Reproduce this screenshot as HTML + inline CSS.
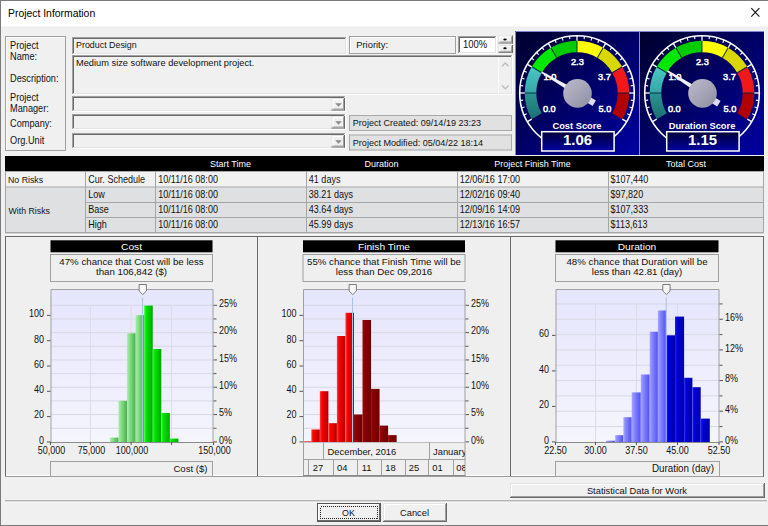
<!DOCTYPE html>
<html><head><meta charset="utf-8"><style>
*{margin:0;padding:0}
html,body{width:768px;height:526px;overflow:hidden;background:#f0f0f0}
svg{position:absolute;left:0;top:0;display:block}
</style></head><body>
<svg width="768" height="526" viewBox="0 0 768 526" font-family='"Liberation Sans", sans-serif'>
<rect x="0" y="0" width="768" height="526" fill="#f0f0f0" />
<rect x="1" y="1" width="767" height="25" fill="#ffffff" />
<line x1="1" y1="26.5" x2="768" y2="26.5" stroke="#f6f6f6" stroke-width="1" />
<line x1="0" y1="0.5" x2="768" y2="0.5" stroke="#7a7a7a" stroke-width="1" />
<line x1="0.5" y1="0" x2="0.5" y2="526" stroke="#7a7a7a" stroke-width="1" />
<line x1="0" y1="525.5" x2="768" y2="525.5" stroke="#7a7a7a" stroke-width="1" />
<text transform="translate(8,17) scale(1,1.06)" font-size="10.4" fill="#000" text-anchor="start" font-weight="normal" >Project Information</text>
<path d="M751.3,8.2 L759.4,16.6 M759.4,8.2 L751.3,16.6" stroke="#111" stroke-width="1.1"/>
<line x1="5" y1="36.5" x2="66" y2="36.5" stroke="#a0a0a0" stroke-width="1" />
<line x1="5.5" y1="36" x2="5.5" y2="151" stroke="#a0a0a0" stroke-width="1" />
<line x1="5" y1="150.5" x2="66" y2="150.5" stroke="#a0a0a0" stroke-width="1" />
<line x1="65.5" y1="36" x2="65.5" y2="151" stroke="#a0a0a0" stroke-width="1" />
<line x1="6" y1="37.5" x2="65" y2="37.5" stroke="#ffffff" stroke-width="1" />
<line x1="6.5" y1="37" x2="6.5" y2="150" stroke="#ffffff" stroke-width="1" />
<text transform="translate(10,49) scale(1,1.15)" font-size="9.2" fill="#111" text-anchor="start" font-weight="normal" >Project</text>
<text transform="translate(10,60) scale(1,1.15)" font-size="9.2" fill="#111" text-anchor="start" font-weight="normal" >Name:</text>
<text transform="translate(10,82.3) scale(1,1.15)" font-size="9.2" fill="#111" text-anchor="start" font-weight="normal" >Description:</text>
<text transform="translate(10,100.7) scale(1,1.15)" font-size="9.2" fill="#111" text-anchor="start" font-weight="normal" >Project</text>
<text transform="translate(10,111.6) scale(1,1.15)" font-size="9.2" fill="#111" text-anchor="start" font-weight="normal" >Manager:</text>
<text transform="translate(10,126.8) scale(1,1.15)" font-size="9.2" fill="#111" text-anchor="start" font-weight="normal" >Company:</text>
<text transform="translate(10,143.9) scale(1,1.15)" font-size="9.2" fill="#111" text-anchor="start" font-weight="normal" >Org.Unit</text>
<rect x="72" y="37" width="275" height="18" fill="#f0f0f0" />
<line x1="72" y1="37.5" x2="347" y2="37.5" stroke="#a0a0a0" stroke-width="1" />
<line x1="72.5" y1="37" x2="72.5" y2="55" stroke="#a0a0a0" stroke-width="1" />
<line x1="72" y1="54.5" x2="347" y2="54.5" stroke="#ffffff" stroke-width="1" />
<line x1="346.5" y1="37" x2="346.5" y2="55" stroke="#ffffff" stroke-width="1" />
<line x1="73" y1="38.5" x2="346" y2="38.5" stroke="#696969" stroke-width="1" />
<line x1="73.5" y1="38" x2="73.5" y2="54" stroke="#696969" stroke-width="1" />
<line x1="73" y1="53.5" x2="346" y2="53.5" stroke="#e3e3e3" stroke-width="1" />
<line x1="345.5" y1="38" x2="345.5" y2="54" stroke="#e3e3e3" stroke-width="1" />
<text transform="translate(76,47.5) scale(1,1.03)" font-size="8.9" fill="#111" text-anchor="start" font-weight="normal" >Product Design</text>
<rect x="72" y="55" width="441" height="40" fill="#f0f0f0" />
<line x1="72" y1="55.5" x2="513" y2="55.5" stroke="#a0a0a0" stroke-width="1" />
<line x1="72.5" y1="55" x2="72.5" y2="95" stroke="#a0a0a0" stroke-width="1" />
<line x1="72" y1="94.5" x2="513" y2="94.5" stroke="#ffffff" stroke-width="1" />
<line x1="512.5" y1="55" x2="512.5" y2="95" stroke="#ffffff" stroke-width="1" />
<line x1="73" y1="56.5" x2="512" y2="56.5" stroke="#696969" stroke-width="1" />
<line x1="73.5" y1="56" x2="73.5" y2="94" stroke="#696969" stroke-width="1" />
<line x1="73" y1="93.5" x2="512" y2="93.5" stroke="#e3e3e3" stroke-width="1" />
<line x1="511.5" y1="56" x2="511.5" y2="94" stroke="#e3e3e3" stroke-width="1" />
<text transform="translate(76,66.2) scale(1,1.03)" font-size="9.27" fill="#111" text-anchor="start" font-weight="normal" >Medium size software development project.</text>
<line x1="498.5" y1="57" x2="498.5" y2="94" stroke="#fafafa" stroke-width="1" />
<path d="M502,66.3 L505.3,63 L508.6,66.3" fill="none" stroke="#bdbdbd" stroke-width="1.5"/><path d="M502,85.5 L505.3,88.8 L508.6,85.5" fill="none" stroke="#bdbdbd" stroke-width="1.5"/>
<rect x="349" y="36" width="107" height="18" fill="#f0f0f0" />
<line x1="349" y1="36.5" x2="456" y2="36.5" stroke="#a0a0a0" stroke-width="1" />
<line x1="349.5" y1="36" x2="349.5" y2="54" stroke="#a0a0a0" stroke-width="1" />
<line x1="349" y1="53.5" x2="456" y2="53.5" stroke="#a0a0a0" stroke-width="1" />
<line x1="455.5" y1="36" x2="455.5" y2="54" stroke="#a0a0a0" stroke-width="1" />
<line x1="350" y1="37.5" x2="455" y2="37.5" stroke="#ffffff" stroke-width="1" />
<line x1="350.5" y1="37" x2="350.5" y2="53" stroke="#ffffff" stroke-width="1" />
<text transform="translate(356.2,47.6) scale(1,1.05)" font-size="9.4" fill="#111" text-anchor="start" font-weight="normal" >Priority:</text>
<rect x="458" y="36" width="39" height="18" fill="#ffffff" />
<line x1="458" y1="36.5" x2="497" y2="36.5" stroke="#a0a0a0" stroke-width="1" />
<line x1="458.5" y1="36" x2="458.5" y2="54" stroke="#a0a0a0" stroke-width="1" />
<line x1="458" y1="53.5" x2="497" y2="53.5" stroke="#ffffff" stroke-width="1" />
<line x1="496.5" y1="36" x2="496.5" y2="54" stroke="#ffffff" stroke-width="1" />
<line x1="459" y1="37.5" x2="496" y2="37.5" stroke="#696969" stroke-width="1" />
<line x1="459.5" y1="37" x2="459.5" y2="53" stroke="#696969" stroke-width="1" />
<line x1="459" y1="52.5" x2="496" y2="52.5" stroke="#e3e3e3" stroke-width="1" />
<line x1="495.5" y1="37" x2="495.5" y2="53" stroke="#e3e3e3" stroke-width="1" />
<text transform="translate(463,47.8) scale(1,1.08)" font-size="9.5" fill="#111" text-anchor="start" font-weight="normal" >100%</text>
<rect x="498.5" y="35.5" width="14.5" height="8.0" fill="#f0f0f0" />
<line x1="498.5" y1="36.0" x2="513" y2="36.0" stroke="#e3e3e3" stroke-width="1" />
<line x1="499.0" y1="35.5" x2="499.0" y2="43.5" stroke="#e3e3e3" stroke-width="1" />
<line x1="498.5" y1="43.0" x2="513" y2="43.0" stroke="#696969" stroke-width="1" />
<line x1="512.5" y1="35.5" x2="512.5" y2="43.5" stroke="#696969" stroke-width="1" />
<line x1="499.5" y1="37.0" x2="512" y2="37.0" stroke="#ffffff" stroke-width="1" />
<line x1="500.0" y1="36.5" x2="500.0" y2="42.5" stroke="#ffffff" stroke-width="1" />
<line x1="499.5" y1="42.0" x2="512" y2="42.0" stroke="#a0a0a0" stroke-width="1" />
<line x1="511.5" y1="36.5" x2="511.5" y2="42.5" stroke="#a0a0a0" stroke-width="1" />
<ellipse cx="505" cy="39.4" rx="1.7" ry="1" fill="#000"/>
<rect x="498.5" y="45" width="14.5" height="7.799999999999997" fill="#f0f0f0" />
<line x1="498.5" y1="45.5" x2="513" y2="45.5" stroke="#e3e3e3" stroke-width="1" />
<line x1="499.0" y1="45" x2="499.0" y2="52.8" stroke="#e3e3e3" stroke-width="1" />
<line x1="498.5" y1="52.3" x2="513" y2="52.3" stroke="#696969" stroke-width="1" />
<line x1="512.5" y1="45" x2="512.5" y2="52.8" stroke="#696969" stroke-width="1" />
<line x1="499.5" y1="46.5" x2="512" y2="46.5" stroke="#ffffff" stroke-width="1" />
<line x1="500.0" y1="46" x2="500.0" y2="51.8" stroke="#ffffff" stroke-width="1" />
<line x1="499.5" y1="51.3" x2="512" y2="51.3" stroke="#a0a0a0" stroke-width="1" />
<line x1="511.5" y1="46" x2="511.5" y2="51.8" stroke="#a0a0a0" stroke-width="1" />
<ellipse cx="505" cy="48.3" rx="1.7" ry="1" fill="#000"/>
<rect x="72" y="96" width="274" height="16" fill="#f0f0f0" />
<line x1="72" y1="96.5" x2="346" y2="96.5" stroke="#a0a0a0" stroke-width="1" />
<line x1="72.5" y1="96" x2="72.5" y2="112" stroke="#a0a0a0" stroke-width="1" />
<line x1="72" y1="111.5" x2="346" y2="111.5" stroke="#ffffff" stroke-width="1" />
<line x1="345.5" y1="96" x2="345.5" y2="112" stroke="#ffffff" stroke-width="1" />
<line x1="73" y1="97.5" x2="345" y2="97.5" stroke="#696969" stroke-width="1" />
<line x1="73.5" y1="97" x2="73.5" y2="111" stroke="#696969" stroke-width="1" />
<line x1="73" y1="110.5" x2="345" y2="110.5" stroke="#e3e3e3" stroke-width="1" />
<line x1="344.5" y1="97" x2="344.5" y2="111" stroke="#e3e3e3" stroke-width="1" />
<rect x="331.5" y="98" width="13.5" height="12.5" fill="#f0f0f0" />
<line x1="331.5" y1="98.5" x2="345" y2="98.5" stroke="#e3e3e3" stroke-width="1" />
<line x1="332.0" y1="98" x2="332.0" y2="110.5" stroke="#e3e3e3" stroke-width="1" />
<line x1="331.5" y1="110.0" x2="345" y2="110.0" stroke="#696969" stroke-width="1" />
<line x1="344.5" y1="98" x2="344.5" y2="110.5" stroke="#696969" stroke-width="1" />
<line x1="332.5" y1="99.5" x2="344" y2="99.5" stroke="#ffffff" stroke-width="1" />
<line x1="333.0" y1="99" x2="333.0" y2="109.5" stroke="#ffffff" stroke-width="1" />
<line x1="332.5" y1="109.0" x2="344" y2="109.0" stroke="#a0a0a0" stroke-width="1" />
<line x1="343.5" y1="99" x2="343.5" y2="109.5" stroke="#a0a0a0" stroke-width="1" />
<path d="M335.2,103.3 L341.8,103.3 L338.5,106.8 Z" fill="#8a8a8a"/>
<rect x="72" y="114" width="274" height="16" fill="#f0f0f0" />
<line x1="72" y1="114.5" x2="346" y2="114.5" stroke="#a0a0a0" stroke-width="1" />
<line x1="72.5" y1="114" x2="72.5" y2="130" stroke="#a0a0a0" stroke-width="1" />
<line x1="72" y1="129.5" x2="346" y2="129.5" stroke="#ffffff" stroke-width="1" />
<line x1="345.5" y1="114" x2="345.5" y2="130" stroke="#ffffff" stroke-width="1" />
<line x1="73" y1="115.5" x2="345" y2="115.5" stroke="#696969" stroke-width="1" />
<line x1="73.5" y1="115" x2="73.5" y2="129" stroke="#696969" stroke-width="1" />
<line x1="73" y1="128.5" x2="345" y2="128.5" stroke="#e3e3e3" stroke-width="1" />
<line x1="344.5" y1="115" x2="344.5" y2="129" stroke="#e3e3e3" stroke-width="1" />
<rect x="331.5" y="116" width="13.5" height="12.5" fill="#f0f0f0" />
<line x1="331.5" y1="116.5" x2="345" y2="116.5" stroke="#e3e3e3" stroke-width="1" />
<line x1="332.0" y1="116" x2="332.0" y2="128.5" stroke="#e3e3e3" stroke-width="1" />
<line x1="331.5" y1="128.0" x2="345" y2="128.0" stroke="#696969" stroke-width="1" />
<line x1="344.5" y1="116" x2="344.5" y2="128.5" stroke="#696969" stroke-width="1" />
<line x1="332.5" y1="117.5" x2="344" y2="117.5" stroke="#ffffff" stroke-width="1" />
<line x1="333.0" y1="117" x2="333.0" y2="127.5" stroke="#ffffff" stroke-width="1" />
<line x1="332.5" y1="127.0" x2="344" y2="127.0" stroke="#a0a0a0" stroke-width="1" />
<line x1="343.5" y1="117" x2="343.5" y2="127.5" stroke="#a0a0a0" stroke-width="1" />
<path d="M335.2,121.3 L341.8,121.3 L338.5,124.8 Z" fill="#8a8a8a"/>
<rect x="72" y="133" width="274" height="16" fill="#f0f0f0" />
<line x1="72" y1="133.5" x2="346" y2="133.5" stroke="#a0a0a0" stroke-width="1" />
<line x1="72.5" y1="133" x2="72.5" y2="149" stroke="#a0a0a0" stroke-width="1" />
<line x1="72" y1="148.5" x2="346" y2="148.5" stroke="#ffffff" stroke-width="1" />
<line x1="345.5" y1="133" x2="345.5" y2="149" stroke="#ffffff" stroke-width="1" />
<line x1="73" y1="134.5" x2="345" y2="134.5" stroke="#696969" stroke-width="1" />
<line x1="73.5" y1="134" x2="73.5" y2="148" stroke="#696969" stroke-width="1" />
<line x1="73" y1="147.5" x2="345" y2="147.5" stroke="#e3e3e3" stroke-width="1" />
<line x1="344.5" y1="134" x2="344.5" y2="148" stroke="#e3e3e3" stroke-width="1" />
<rect x="331.5" y="135" width="13.5" height="12.5" fill="#f0f0f0" />
<line x1="331.5" y1="135.5" x2="345" y2="135.5" stroke="#e3e3e3" stroke-width="1" />
<line x1="332.0" y1="135" x2="332.0" y2="147.5" stroke="#e3e3e3" stroke-width="1" />
<line x1="331.5" y1="147.0" x2="345" y2="147.0" stroke="#696969" stroke-width="1" />
<line x1="344.5" y1="135" x2="344.5" y2="147.5" stroke="#696969" stroke-width="1" />
<line x1="332.5" y1="136.5" x2="344" y2="136.5" stroke="#ffffff" stroke-width="1" />
<line x1="333.0" y1="136" x2="333.0" y2="146.5" stroke="#ffffff" stroke-width="1" />
<line x1="332.5" y1="146.0" x2="344" y2="146.0" stroke="#a0a0a0" stroke-width="1" />
<line x1="343.5" y1="136" x2="343.5" y2="146.5" stroke="#a0a0a0" stroke-width="1" />
<path d="M335.2,140.3 L341.8,140.3 L338.5,143.8 Z" fill="#8a8a8a"/>
<rect x="349" y="115" width="163" height="16" fill="#e1e1e1" />
<line x1="349" y1="115.5" x2="512" y2="115.5" stroke="#a8a8a8" stroke-width="1" />
<line x1="349.5" y1="115" x2="349.5" y2="131" stroke="#a8a8a8" stroke-width="1" />
<line x1="349" y1="130.5" x2="512" y2="130.5" stroke="#a8a8a8" stroke-width="1" />
<line x1="511.5" y1="115" x2="511.5" y2="131" stroke="#a8a8a8" stroke-width="1" />
<text transform="translate(352.8,126.1) scale(1,1.1)" font-size="9.07" fill="#111" text-anchor="start" font-weight="normal" >Project Created: 09/14/19 23:23</text>
<rect x="349" y="134.5" width="163" height="16" fill="#e1e1e1" />
<line x1="349" y1="135.0" x2="512" y2="135.0" stroke="#a8a8a8" stroke-width="1" />
<line x1="349.5" y1="134.5" x2="349.5" y2="150.5" stroke="#a8a8a8" stroke-width="1" />
<line x1="349" y1="150.0" x2="512" y2="150.0" stroke="#a8a8a8" stroke-width="1" />
<line x1="511.5" y1="134.5" x2="511.5" y2="150.5" stroke="#a8a8a8" stroke-width="1" />
<text transform="translate(352.8,145.6) scale(1,1.1)" font-size="9.07" fill="#111" text-anchor="start" font-weight="normal" >Project Modified: 05/04/22 18:14</text>
<defs>
<linearGradient id="bga" x1="0" y1="0" x2="1" y2="1"><stop offset="0" stop-color="#00002c"/><stop offset="1" stop-color="#0000a2"/></linearGradient>
<linearGradient id="huba" x1="0" y1="0" x2="1" y2="1"><stop offset="0" stop-color="#bcbccc"/><stop offset="1" stop-color="#8e8ea2"/></linearGradient>
<linearGradient id="boxa" x1="0" y1="0" x2="0" y2="1"><stop offset="0" stop-color="#000038"/><stop offset="1" stop-color="#0000a0"/></linearGradient>
</defs>
<rect x="515" y="31" width="124" height="124" fill="url(#bga)"/>
<path d="M515.5,155 L515.5,31.5 L639,31.5" fill="none" stroke="#8484d4" stroke-width="1"/>
<defs><linearGradient id="t1a" gradientUnits="userSpaceOnUse" x1="0" y1="93" x2="0" y2="120"><stop offset="0" stop-color="#2a9494"/><stop offset="1" stop-color="#1c6e6e"/></linearGradient><linearGradient id="t2a" gradientUnits="userSpaceOnUse" x1="0" y1="66" x2="0" y2="93"><stop offset="0" stop-color="#4cc8c8"/><stop offset="1" stop-color="#36a6a6"/></linearGradient></defs>
<path d="M531.71,119.15 A52.3,52.3 0 0 1 524.70,93.00 L536.30,93.00 A40.7,40.7 0 0 0 541.75,113.35 Z" fill="url(#t1a)"/>
<path d="M524.70,93.00 A52.3,52.3 0 0 1 531.71,66.85 L541.75,72.65 A40.7,40.7 0 0 0 536.30,93.00 Z" fill="url(#t2a)"/>
<path d="M531.71,66.85 A52.3,52.3 0 0 1 550.85,47.71 L556.65,57.75 A40.7,40.7 0 0 0 541.75,72.65 Z" fill="#00e800"/>
<path d="M550.85,47.71 A52.3,52.3 0 0 1 577.00,40.70 L577.00,52.30 A40.7,40.7 0 0 0 556.65,57.75 Z" fill="#00cc00"/>
<path d="M577.00,40.70 A52.3,52.3 0 0 1 603.15,47.71 L597.35,57.75 A40.7,40.7 0 0 0 577.00,52.30 Z" fill="#ffff00"/>
<path d="M603.15,47.71 A52.3,52.3 0 0 1 622.29,66.85 L612.25,72.65 A40.7,40.7 0 0 0 597.35,57.75 Z" fill="#d8d800"/>
<path d="M622.29,66.85 A52.3,52.3 0 0 1 629.30,93.00 L617.70,93.00 A40.7,40.7 0 0 0 612.25,72.65 Z" fill="#f01818"/>
<path d="M629.30,93.00 A52.3,52.3 0 0 1 622.29,119.15 L612.25,113.35 A40.7,40.7 0 0 0 617.70,93.00 Z" fill="#b00000"/>
<line x1="536.30" y1="93.00" x2="524.70" y2="93.00" stroke="#002040" stroke-width="1.1" stroke-opacity="0.8"/>
<line x1="541.75" y1="72.65" x2="531.71" y2="66.85" stroke="#002040" stroke-width="1.1" stroke-opacity="0.8"/>
<line x1="556.65" y1="57.75" x2="550.85" y2="47.71" stroke="#002040" stroke-width="1.1" stroke-opacity="0.8"/>
<line x1="577.00" y1="52.30" x2="577.00" y2="40.70" stroke="#002040" stroke-width="1.1" stroke-opacity="0.8"/>
<line x1="597.35" y1="57.75" x2="603.15" y2="47.71" stroke="#002040" stroke-width="1.1" stroke-opacity="0.8"/>
<line x1="612.25" y1="72.65" x2="622.29" y2="66.85" stroke="#002040" stroke-width="1.1" stroke-opacity="0.8"/>
<line x1="617.70" y1="93.00" x2="629.30" y2="93.00" stroke="#002040" stroke-width="1.1" stroke-opacity="0.8"/>
<circle cx="577" cy="93" r="57.3" fill="none" stroke="#ffffff" stroke-width="1.6"/>
<line x1="531.71" y1="119.15" x2="527.38" y2="121.65" stroke="#ffffff" stroke-width="1.3"/>
<line x1="526.83" y1="113.78" x2="524.06" y2="114.93" stroke="#ffffff" stroke-width="1.1"/>
<line x1="524.55" y1="107.05" x2="521.65" y2="107.83" stroke="#ffffff" stroke-width="1.1"/>
<line x1="523.16" y1="100.09" x2="520.19" y2="100.48" stroke="#ffffff" stroke-width="1.1"/>
<line x1="524.70" y1="93.00" x2="519.70" y2="93.00" stroke="#ffffff" stroke-width="1.3"/>
<line x1="523.16" y1="85.91" x2="520.19" y2="85.52" stroke="#ffffff" stroke-width="1.1"/>
<line x1="524.55" y1="78.95" x2="521.65" y2="78.17" stroke="#ffffff" stroke-width="1.1"/>
<line x1="526.83" y1="72.22" x2="524.06" y2="71.07" stroke="#ffffff" stroke-width="1.1"/>
<line x1="531.71" y1="66.85" x2="527.38" y2="64.35" stroke="#ffffff" stroke-width="1.3"/>
<line x1="533.92" y1="59.94" x2="531.54" y2="58.12" stroke="#ffffff" stroke-width="1.1"/>
<line x1="538.60" y1="54.60" x2="536.48" y2="52.48" stroke="#ffffff" stroke-width="1.1"/>
<line x1="543.94" y1="49.92" x2="542.12" y2="47.54" stroke="#ffffff" stroke-width="1.1"/>
<line x1="550.85" y1="47.71" x2="548.35" y2="43.38" stroke="#ffffff" stroke-width="1.3"/>
<line x1="556.22" y1="42.83" x2="555.07" y2="40.06" stroke="#ffffff" stroke-width="1.1"/>
<line x1="562.95" y1="40.55" x2="562.17" y2="37.65" stroke="#ffffff" stroke-width="1.1"/>
<line x1="569.91" y1="39.16" x2="569.52" y2="36.19" stroke="#ffffff" stroke-width="1.1"/>
<line x1="577.00" y1="40.70" x2="577.00" y2="35.70" stroke="#ffffff" stroke-width="1.3"/>
<line x1="584.09" y1="39.16" x2="584.48" y2="36.19" stroke="#ffffff" stroke-width="1.1"/>
<line x1="591.05" y1="40.55" x2="591.83" y2="37.65" stroke="#ffffff" stroke-width="1.1"/>
<line x1="597.78" y1="42.83" x2="598.93" y2="40.06" stroke="#ffffff" stroke-width="1.1"/>
<line x1="603.15" y1="47.71" x2="605.65" y2="43.38" stroke="#ffffff" stroke-width="1.3"/>
<line x1="610.06" y1="49.92" x2="611.88" y2="47.54" stroke="#ffffff" stroke-width="1.1"/>
<line x1="615.40" y1="54.60" x2="617.52" y2="52.48" stroke="#ffffff" stroke-width="1.1"/>
<line x1="620.08" y1="59.94" x2="622.46" y2="58.12" stroke="#ffffff" stroke-width="1.1"/>
<line x1="622.29" y1="66.85" x2="626.62" y2="64.35" stroke="#ffffff" stroke-width="1.3"/>
<line x1="627.17" y1="72.22" x2="629.94" y2="71.07" stroke="#ffffff" stroke-width="1.1"/>
<line x1="629.45" y1="78.95" x2="632.35" y2="78.17" stroke="#ffffff" stroke-width="1.1"/>
<line x1="630.84" y1="85.91" x2="633.81" y2="85.52" stroke="#ffffff" stroke-width="1.1"/>
<line x1="629.30" y1="93.00" x2="634.30" y2="93.00" stroke="#ffffff" stroke-width="1.3"/>
<line x1="630.84" y1="100.09" x2="633.81" y2="100.48" stroke="#ffffff" stroke-width="1.1"/>
<line x1="629.45" y1="107.05" x2="632.35" y2="107.83" stroke="#ffffff" stroke-width="1.1"/>
<line x1="627.17" y1="113.78" x2="629.94" y2="114.93" stroke="#ffffff" stroke-width="1.1"/>
<line x1="622.29" y1="119.15" x2="626.62" y2="121.65" stroke="#ffffff" stroke-width="1.3"/>
<text transform="translate(549.3,112.2) scale(1,1.0)" font-size="9.2" fill="#fff" text-anchor="middle" font-weight="normal" stroke="#fff" stroke-width="0.5">0.0</text>
<text transform="translate(550,80.4) scale(1,1.0)" font-size="9.2" fill="#fff" text-anchor="middle" font-weight="normal" stroke="#fff" stroke-width="0.5">1.0</text>
<text transform="translate(577.4,64.7) scale(1,1.0)" font-size="9.2" fill="#fff" text-anchor="middle" font-weight="normal" stroke="#fff" stroke-width="0.5">2.3</text>
<text transform="translate(604.5,80.4) scale(1,1.0)" font-size="9.2" fill="#fff" text-anchor="middle" font-weight="normal" stroke="#fff" stroke-width="0.5">3.7</text>
<text transform="translate(604.9,112.2) scale(1,1.0)" font-size="9.2" fill="#fff" text-anchor="middle" font-weight="normal" stroke="#fff" stroke-width="0.5">5.0</text>
<path d="M542.08,71.50 L567.68,85.19 L565.65,88.63 L541.27,72.88 Z" fill="#f0f0f8"/>
<path d="M588.96,96.33 L585.72,101.85 L592.61,105.91 L595.86,100.39 Z" fill="#dcdcec"/>
<circle cx="577.5" cy="93.4" r="14.3" fill="url(#huba)"/>
<text transform="translate(577,129.4) scale(1,1.0)" font-size="9.3" fill="#fff" text-anchor="middle" font-weight="bold" >Cost Score</text>
<rect x="541.7" y="131.7" width="72.4" height="19.3" fill="url(#boxa)" stroke="#ffffff" stroke-width="1.5"/>
<text transform="translate(577.5,145.4) scale(1,1.0)" font-size="15" fill="#fff" text-anchor="middle" font-weight="bold" >1.06</text>
<defs>
<linearGradient id="bgb" x1="0" y1="0" x2="1" y2="1"><stop offset="0" stop-color="#00002c"/><stop offset="1" stop-color="#0000a2"/></linearGradient>
<linearGradient id="hubb" x1="0" y1="0" x2="1" y2="1"><stop offset="0" stop-color="#bcbccc"/><stop offset="1" stop-color="#8e8ea2"/></linearGradient>
<linearGradient id="boxb" x1="0" y1="0" x2="0" y2="1"><stop offset="0" stop-color="#000038"/><stop offset="1" stop-color="#0000a0"/></linearGradient>
</defs>
<rect x="640" y="31" width="124" height="124" fill="url(#bgb)"/>
<path d="M640,31.5 L764,31.5" fill="none" stroke="#8484d4" stroke-width="1"/>
<defs><linearGradient id="t1b" gradientUnits="userSpaceOnUse" x1="0" y1="93" x2="0" y2="120"><stop offset="0" stop-color="#2a9494"/><stop offset="1" stop-color="#1c6e6e"/></linearGradient><linearGradient id="t2b" gradientUnits="userSpaceOnUse" x1="0" y1="66" x2="0" y2="93"><stop offset="0" stop-color="#4cc8c8"/><stop offset="1" stop-color="#36a6a6"/></linearGradient></defs>
<path d="M656.71,119.15 A52.3,52.3 0 0 1 649.70,93.00 L661.30,93.00 A40.7,40.7 0 0 0 666.75,113.35 Z" fill="url(#t1b)"/>
<path d="M649.70,93.00 A52.3,52.3 0 0 1 656.71,66.85 L666.75,72.65 A40.7,40.7 0 0 0 661.30,93.00 Z" fill="url(#t2b)"/>
<path d="M656.71,66.85 A52.3,52.3 0 0 1 675.85,47.71 L681.65,57.75 A40.7,40.7 0 0 0 666.75,72.65 Z" fill="#00e800"/>
<path d="M675.85,47.71 A52.3,52.3 0 0 1 702.00,40.70 L702.00,52.30 A40.7,40.7 0 0 0 681.65,57.75 Z" fill="#00cc00"/>
<path d="M702.00,40.70 A52.3,52.3 0 0 1 728.15,47.71 L722.35,57.75 A40.7,40.7 0 0 0 702.00,52.30 Z" fill="#ffff00"/>
<path d="M728.15,47.71 A52.3,52.3 0 0 1 747.29,66.85 L737.25,72.65 A40.7,40.7 0 0 0 722.35,57.75 Z" fill="#d8d800"/>
<path d="M747.29,66.85 A52.3,52.3 0 0 1 754.30,93.00 L742.70,93.00 A40.7,40.7 0 0 0 737.25,72.65 Z" fill="#f01818"/>
<path d="M754.30,93.00 A52.3,52.3 0 0 1 747.29,119.15 L737.25,113.35 A40.7,40.7 0 0 0 742.70,93.00 Z" fill="#b00000"/>
<line x1="661.30" y1="93.00" x2="649.70" y2="93.00" stroke="#002040" stroke-width="1.1" stroke-opacity="0.8"/>
<line x1="666.75" y1="72.65" x2="656.71" y2="66.85" stroke="#002040" stroke-width="1.1" stroke-opacity="0.8"/>
<line x1="681.65" y1="57.75" x2="675.85" y2="47.71" stroke="#002040" stroke-width="1.1" stroke-opacity="0.8"/>
<line x1="702.00" y1="52.30" x2="702.00" y2="40.70" stroke="#002040" stroke-width="1.1" stroke-opacity="0.8"/>
<line x1="722.35" y1="57.75" x2="728.15" y2="47.71" stroke="#002040" stroke-width="1.1" stroke-opacity="0.8"/>
<line x1="737.25" y1="72.65" x2="747.29" y2="66.85" stroke="#002040" stroke-width="1.1" stroke-opacity="0.8"/>
<line x1="742.70" y1="93.00" x2="754.30" y2="93.00" stroke="#002040" stroke-width="1.1" stroke-opacity="0.8"/>
<circle cx="702" cy="93" r="57.3" fill="none" stroke="#ffffff" stroke-width="1.6"/>
<line x1="656.71" y1="119.15" x2="652.38" y2="121.65" stroke="#ffffff" stroke-width="1.3"/>
<line x1="651.83" y1="113.78" x2="649.06" y2="114.93" stroke="#ffffff" stroke-width="1.1"/>
<line x1="649.55" y1="107.05" x2="646.65" y2="107.83" stroke="#ffffff" stroke-width="1.1"/>
<line x1="648.16" y1="100.09" x2="645.19" y2="100.48" stroke="#ffffff" stroke-width="1.1"/>
<line x1="649.70" y1="93.00" x2="644.70" y2="93.00" stroke="#ffffff" stroke-width="1.3"/>
<line x1="648.16" y1="85.91" x2="645.19" y2="85.52" stroke="#ffffff" stroke-width="1.1"/>
<line x1="649.55" y1="78.95" x2="646.65" y2="78.17" stroke="#ffffff" stroke-width="1.1"/>
<line x1="651.83" y1="72.22" x2="649.06" y2="71.07" stroke="#ffffff" stroke-width="1.1"/>
<line x1="656.71" y1="66.85" x2="652.38" y2="64.35" stroke="#ffffff" stroke-width="1.3"/>
<line x1="658.92" y1="59.94" x2="656.54" y2="58.12" stroke="#ffffff" stroke-width="1.1"/>
<line x1="663.60" y1="54.60" x2="661.48" y2="52.48" stroke="#ffffff" stroke-width="1.1"/>
<line x1="668.94" y1="49.92" x2="667.12" y2="47.54" stroke="#ffffff" stroke-width="1.1"/>
<line x1="675.85" y1="47.71" x2="673.35" y2="43.38" stroke="#ffffff" stroke-width="1.3"/>
<line x1="681.22" y1="42.83" x2="680.07" y2="40.06" stroke="#ffffff" stroke-width="1.1"/>
<line x1="687.95" y1="40.55" x2="687.17" y2="37.65" stroke="#ffffff" stroke-width="1.1"/>
<line x1="694.91" y1="39.16" x2="694.52" y2="36.19" stroke="#ffffff" stroke-width="1.1"/>
<line x1="702.00" y1="40.70" x2="702.00" y2="35.70" stroke="#ffffff" stroke-width="1.3"/>
<line x1="709.09" y1="39.16" x2="709.48" y2="36.19" stroke="#ffffff" stroke-width="1.1"/>
<line x1="716.05" y1="40.55" x2="716.83" y2="37.65" stroke="#ffffff" stroke-width="1.1"/>
<line x1="722.78" y1="42.83" x2="723.93" y2="40.06" stroke="#ffffff" stroke-width="1.1"/>
<line x1="728.15" y1="47.71" x2="730.65" y2="43.38" stroke="#ffffff" stroke-width="1.3"/>
<line x1="735.06" y1="49.92" x2="736.88" y2="47.54" stroke="#ffffff" stroke-width="1.1"/>
<line x1="740.40" y1="54.60" x2="742.52" y2="52.48" stroke="#ffffff" stroke-width="1.1"/>
<line x1="745.08" y1="59.94" x2="747.46" y2="58.12" stroke="#ffffff" stroke-width="1.1"/>
<line x1="747.29" y1="66.85" x2="751.62" y2="64.35" stroke="#ffffff" stroke-width="1.3"/>
<line x1="752.17" y1="72.22" x2="754.94" y2="71.07" stroke="#ffffff" stroke-width="1.1"/>
<line x1="754.45" y1="78.95" x2="757.35" y2="78.17" stroke="#ffffff" stroke-width="1.1"/>
<line x1="755.84" y1="85.91" x2="758.81" y2="85.52" stroke="#ffffff" stroke-width="1.1"/>
<line x1="754.30" y1="93.00" x2="759.30" y2="93.00" stroke="#ffffff" stroke-width="1.3"/>
<line x1="755.84" y1="100.09" x2="758.81" y2="100.48" stroke="#ffffff" stroke-width="1.1"/>
<line x1="754.45" y1="107.05" x2="757.35" y2="107.83" stroke="#ffffff" stroke-width="1.1"/>
<line x1="752.17" y1="113.78" x2="754.94" y2="114.93" stroke="#ffffff" stroke-width="1.1"/>
<line x1="747.29" y1="119.15" x2="751.62" y2="121.65" stroke="#ffffff" stroke-width="1.3"/>
<text transform="translate(674.3,112.2) scale(1,1.0)" font-size="9.2" fill="#fff" text-anchor="middle" font-weight="normal" stroke="#fff" stroke-width="0.5">0.0</text>
<text transform="translate(675,80.4) scale(1,1.0)" font-size="9.2" fill="#fff" text-anchor="middle" font-weight="normal" stroke="#fff" stroke-width="0.5">1.0</text>
<text transform="translate(702.4,64.7) scale(1,1.0)" font-size="9.2" fill="#fff" text-anchor="middle" font-weight="normal" stroke="#fff" stroke-width="0.5">2.3</text>
<text transform="translate(729.5,80.4) scale(1,1.0)" font-size="9.2" fill="#fff" text-anchor="middle" font-weight="normal" stroke="#fff" stroke-width="0.5">3.7</text>
<text transform="translate(729.9,112.2) scale(1,1.0)" font-size="9.2" fill="#fff" text-anchor="middle" font-weight="normal" stroke="#fff" stroke-width="0.5">5.0</text>
<path d="M667.85,70.30 L692.95,84.87 L690.80,88.24 L666.99,71.65 Z" fill="#f0f0f8"/>
<path d="M713.84,96.75 L710.40,102.15 L717.15,106.44 L720.59,101.05 Z" fill="#dcdcec"/>
<circle cx="702.5" cy="93.4" r="14.3" fill="url(#hubb)"/>
<text transform="translate(702,129.4) scale(1,1.0)" font-size="9.3" fill="#fff" text-anchor="middle" font-weight="bold" >Duration Score</text>
<rect x="666.7" y="131.7" width="72.4" height="19.3" fill="url(#boxb)" stroke="#ffffff" stroke-width="1.5"/>
<text transform="translate(702.5,145.4) scale(1,1.0)" font-size="15" fill="#fff" text-anchor="middle" font-weight="bold" >1.15</text>
<line x1="639.5" y1="31" x2="639.5" y2="155" stroke="#8a8ad8" stroke-width="1" />
<line x1="764.5" y1="31" x2="764.5" y2="155" stroke="#fafafa" stroke-width="1" />
<defs>
<linearGradient id="plotbg" x1="0" y1="0" x2="0" y2="1"><stop offset="0" stop-color="#e5e5fd"/><stop offset="1" stop-color="#f5f5fd"/></linearGradient>
<linearGradient id="gL" x1="0" y1="0" x2="1" y2="0"><stop offset="0" stop-color="#a0f0a0"/><stop offset="0.2" stop-color="#92e692"/><stop offset="1" stop-color="#4eac4e"/></linearGradient>
<linearGradient id="gD" x1="0" y1="0" x2="1" y2="0"><stop offset="0" stop-color="#30ff30"/><stop offset="0.25" stop-color="#00e400"/><stop offset="1" stop-color="#00a800"/></linearGradient>
<linearGradient id="rL" x1="0" y1="0" x2="1" y2="0"><stop offset="0" stop-color="#ff4040"/><stop offset="0.25" stop-color="#f80000"/><stop offset="1" stop-color="#b80000"/></linearGradient>
<linearGradient id="rD" x1="0" y1="0" x2="1" y2="0"><stop offset="0" stop-color="#980808"/><stop offset="0.25" stop-color="#8c0000"/><stop offset="1" stop-color="#6c0000"/></linearGradient>
<linearGradient id="bL" x1="0" y1="0" x2="1" y2="0"><stop offset="0" stop-color="#a8a8ff"/><stop offset="0.25" stop-color="#8a8aff"/><stop offset="1" stop-color="#5050f6"/></linearGradient>
<linearGradient id="bD" x1="0" y1="0" x2="1" y2="0"><stop offset="0" stop-color="#2020f0"/><stop offset="0.25" stop-color="#0000dc"/><stop offset="1" stop-color="#0000a4"/></linearGradient>
<clipPath id="clipdate"><rect x="303" y="442" width="162" height="35"/></clipPath>
</defs>
<rect x="5" y="156" width="759" height="15.5" fill="#000" />
<rect x="5" y="171.5" width="759" height="15.5" fill="#f1f1f1" />
<rect x="5" y="187" width="759" height="45.5" fill="#dfe0e2" />
<line x1="5" y1="171.5" x2="763.5" y2="171.5" stroke="#a6a6a6" stroke-width="1" />
<line x1="5" y1="187" x2="763.5" y2="187" stroke="#a6a6a6" stroke-width="1" />
<line x1="85.5" y1="202.5" x2="763.5" y2="202.5" stroke="#a6a6a6" stroke-width="1" />
<line x1="85.5" y1="217.5" x2="763.5" y2="217.5" stroke="#a6a6a6" stroke-width="1" />
<line x1="5" y1="232.5" x2="763.5" y2="232.5" stroke="#a6a6a6" stroke-width="1" />
<line x1="5.5" y1="171.5" x2="5.5" y2="232.5" stroke="#a6a6a6" stroke-width="1" />
<line x1="85.5" y1="171.5" x2="85.5" y2="232.5" stroke="#a6a6a6" stroke-width="1" />
<line x1="155.5" y1="171.5" x2="155.5" y2="232.5" stroke="#a6a6a6" stroke-width="1" />
<line x1="306.5" y1="171.5" x2="306.5" y2="232.5" stroke="#a6a6a6" stroke-width="1" />
<line x1="457.5" y1="171.5" x2="457.5" y2="232.5" stroke="#a6a6a6" stroke-width="1" />
<line x1="608.5" y1="171.5" x2="608.5" y2="232.5" stroke="#a6a6a6" stroke-width="1" />
<line x1="763.5" y1="171.5" x2="763.5" y2="232.5" stroke="#a6a6a6" stroke-width="1" />
<line x1="5" y1="233.5" x2="764" y2="233.5" stroke="#d0d0d0" stroke-width="1" />
<line x1="5" y1="234.5" x2="764" y2="234.5" stroke="#fafafa" stroke-width="1" />
<text transform="translate(230.5,167) scale(1,1.03)" font-size="9" fill="#fff" text-anchor="middle" font-weight="normal" >Start Time</text>
<text transform="translate(381.5,167) scale(1,1.03)" font-size="9" fill="#fff" text-anchor="middle" font-weight="normal" >Duration</text>
<text transform="translate(532.5,167) scale(1,1.03)" font-size="9" fill="#fff" text-anchor="middle" font-weight="normal" >Project Finish Time</text>
<text transform="translate(686,167) scale(1,1.03)" font-size="9" fill="#fff" text-anchor="middle" font-weight="normal" >Total Cost</text>
<text transform="translate(8,182.5) scale(1,1.12)" font-size="8.8" fill="#111" text-anchor="start" font-weight="normal" >No Risks</text>
<text transform="translate(8.5,213.5) scale(1,1.12)" font-size="8.8" fill="#111" text-anchor="start" font-weight="normal" >With Risks</text>
<text transform="translate(88.3,182.6) scale(1,1.12)" font-size="9.05" fill="#111" text-anchor="start" font-weight="normal" >Cur. Schedule</text>
<text transform="translate(158.3,182.6) scale(1,1.12)" font-size="9.05" fill="#111" text-anchor="start" font-weight="normal" >10/11/16 08:00</text>
<text transform="translate(308.8,182.6) scale(1,1.12)" font-size="9.05" fill="#111" text-anchor="start" font-weight="normal" >41 days</text>
<text transform="translate(459.7,182.6) scale(1,1.12)" font-size="9.05" fill="#111" text-anchor="start" font-weight="normal" >12/06/16 17:00</text>
<text transform="translate(610.5,182.6) scale(1,1.12)" font-size="9.05" fill="#111" text-anchor="start" font-weight="normal" >$107,440</text>
<text transform="translate(88.3,197.6) scale(1,1.12)" font-size="9.05" fill="#111" text-anchor="start" font-weight="normal" >Low</text>
<text transform="translate(158.3,197.6) scale(1,1.12)" font-size="9.05" fill="#111" text-anchor="start" font-weight="normal" >10/11/16 08:00</text>
<text transform="translate(308.8,197.6) scale(1,1.12)" font-size="9.05" fill="#111" text-anchor="start" font-weight="normal" >38.21 days</text>
<text transform="translate(459.7,197.6) scale(1,1.12)" font-size="9.05" fill="#111" text-anchor="start" font-weight="normal" >12/02/16 09:40</text>
<text transform="translate(610.5,197.6) scale(1,1.12)" font-size="9.05" fill="#111" text-anchor="start" font-weight="normal" >$97,820</text>
<text transform="translate(88.3,212.6) scale(1,1.12)" font-size="9.05" fill="#111" text-anchor="start" font-weight="normal" >Base</text>
<text transform="translate(158.3,212.6) scale(1,1.12)" font-size="9.05" fill="#111" text-anchor="start" font-weight="normal" >10/11/16 08:00</text>
<text transform="translate(308.8,212.6) scale(1,1.12)" font-size="9.05" fill="#111" text-anchor="start" font-weight="normal" >43.64 days</text>
<text transform="translate(459.7,212.6) scale(1,1.12)" font-size="9.05" fill="#111" text-anchor="start" font-weight="normal" >12/09/16 14:09</text>
<text transform="translate(610.5,212.6) scale(1,1.12)" font-size="9.05" fill="#111" text-anchor="start" font-weight="normal" >$107,333</text>
<text transform="translate(88.3,227.6) scale(1,1.12)" font-size="9.05" fill="#111" text-anchor="start" font-weight="normal" >High</text>
<text transform="translate(158.3,227.6) scale(1,1.12)" font-size="9.05" fill="#111" text-anchor="start" font-weight="normal" >10/11/16 08:00</text>
<text transform="translate(308.8,227.6) scale(1,1.12)" font-size="9.05" fill="#111" text-anchor="start" font-weight="normal" >45.99 days</text>
<text transform="translate(459.7,227.6) scale(1,1.12)" font-size="9.05" fill="#111" text-anchor="start" font-weight="normal" >12/13/16 16:57</text>
<text transform="translate(610.5,227.6) scale(1,1.12)" font-size="9.05" fill="#111" text-anchor="start" font-weight="normal" >$113,613</text>
<rect x="5" y="236" width="252" height="241" fill="#efefef" />
<line x1="5.5" y1="236" x2="5.5" y2="477" stroke="#6a6a6a" stroke-width="1" />
<line x1="5" y1="236.5" x2="257" y2="236.5" stroke="#6a6a6a" stroke-width="1" />
<line x1="6" y1="475.5" x2="257" y2="475.5" stroke="#ffffff" stroke-width="1" />
<line x1="5" y1="476.5" x2="257" y2="476.5" stroke="#9a9a9a" stroke-width="1" />
<rect x="257" y="236" width="253" height="241" fill="#efefef" />
<line x1="257.5" y1="236" x2="257.5" y2="477" stroke="#6a6a6a" stroke-width="1" />
<line x1="257" y1="236.5" x2="510" y2="236.5" stroke="#6a6a6a" stroke-width="1" />
<line x1="258" y1="475.5" x2="510" y2="475.5" stroke="#ffffff" stroke-width="1" />
<line x1="257" y1="476.5" x2="510" y2="476.5" stroke="#9a9a9a" stroke-width="1" />
<rect x="510" y="236" width="254" height="241" fill="#efefef" />
<line x1="510.5" y1="236" x2="510.5" y2="477" stroke="#6a6a6a" stroke-width="1" />
<line x1="510" y1="236.5" x2="764" y2="236.5" stroke="#6a6a6a" stroke-width="1" />
<line x1="511" y1="475.5" x2="764" y2="475.5" stroke="#ffffff" stroke-width="1" />
<line x1="510" y1="476.5" x2="764" y2="476.5" stroke="#9a9a9a" stroke-width="1" />
<line x1="763.5" y1="236" x2="763.5" y2="477" stroke="#6a6a6a" stroke-width="1" />
<rect x="50.5" y="240.3" width="162" height="12" fill="#000" />
<text transform="translate(131.5,249.8) scale(1,0.95)" font-size="10.2" fill="#fff" text-anchor="middle" font-weight="normal" >Cost</text>
<rect x="50.5" y="254.5" width="162" height="27" fill="#efefef" stroke="#a0a0a0"/>
<text transform="translate(131.5,265.0) scale(1,1.0)" font-size="9.7" fill="#111" text-anchor="middle" font-weight="normal" >47% chance that Cost will be less</text>
<text transform="translate(131.5,275.0) scale(1,1.0)" font-size="9.7" fill="#111" text-anchor="middle" font-weight="normal" >than 106,842 ($)</text>
<rect x="50.5" y="289.5" width="163.0" height="152.5" fill="url(#plotbg)" />
<line x1="50.5" y1="428.23999999999995" x2="213.5" y2="428.23999999999995" stroke="#d8d8e4" stroke-width="1" />
<line x1="50.5" y1="414.58" x2="213.5" y2="414.58" stroke="#d8d8e4" stroke-width="1" />
<line x1="50.5" y1="400.91999999999996" x2="213.5" y2="400.91999999999996" stroke="#d8d8e4" stroke-width="1" />
<line x1="50.5" y1="387.26" x2="213.5" y2="387.26" stroke="#d8d8e4" stroke-width="1" />
<line x1="50.5" y1="373.59999999999997" x2="213.5" y2="373.59999999999997" stroke="#d8d8e4" stroke-width="1" />
<line x1="50.5" y1="359.93999999999994" x2="213.5" y2="359.93999999999994" stroke="#d8d8e4" stroke-width="1" />
<line x1="50.5" y1="346.28" x2="213.5" y2="346.28" stroke="#d8d8e4" stroke-width="1" />
<line x1="50.5" y1="332.62" x2="213.5" y2="332.62" stroke="#d8d8e4" stroke-width="1" />
<line x1="50.5" y1="318.96" x2="213.5" y2="318.96" stroke="#d8d8e4" stroke-width="1" />
<line x1="50.5" y1="305.29999999999995" x2="213.5" y2="305.29999999999995" stroke="#d8d8e4" stroke-width="1" />
<line x1="90.4" y1="305.29999999999995" x2="90.4" y2="442" stroke="#dcdce8" stroke-width="1" />
<line x1="131.1" y1="305.29999999999995" x2="131.1" y2="442" stroke="#dcdce8" stroke-width="1" />
<line x1="171.6" y1="305.29999999999995" x2="171.6" y2="442" stroke="#dcdce8" stroke-width="1" />
<rect x="110.0" y="437.6" width="8.549999999999997" height="4.399999999999977" fill="url(#gL)" />
<rect x="118.55" y="400.8" width="8.549999999999997" height="41.19999999999999" fill="url(#gL)" />
<rect x="127.1" y="333.3" width="8.550000000000011" height="108.69999999999999" fill="url(#gL)" />
<rect x="135.65" y="315.2" width="8.549999999999983" height="126.80000000000001" fill="url(#gL)" />
<rect x="144.2" y="305.6" width="8.550000000000011" height="136.39999999999998" fill="url(#gD)" />
<rect x="152.75" y="349" width="8.550000000000011" height="93" fill="url(#gD)" />
<rect x="161.3" y="413" width="8.550000000000011" height="29" fill="url(#gD)" />
<rect x="169.85000000000002" y="438.6" width="8.549999999999983" height="3.3999999999999773" fill="url(#gD)" />
<line x1="142.5" y1="297.5" x2="142.5" y2="442" stroke="#a8c4e4" stroke-width="1" />
<path d="M51.0,442 L51.0,289.5 L213.0,289.5 L213.0,442" fill="none" stroke="#a0a0a0"/>
<line x1="50.5" y1="442.5" x2="213.5" y2="442.5" stroke="#8a8a8a" stroke-width="1" />
<path d="M139.1,284.5 L146.4,284.5 L146.4,291 L142.75,294.6 L139.1,291 Z" fill="#f6f6f6" stroke="#7a7a7a" stroke-width="1"/>
<line x1="47.0" y1="441.9" x2="50.5" y2="441.9" stroke="#555" stroke-width="1" />
<text transform="translate(44.0,443.7) scale(1,1.2)" font-size="9" fill="#111" text-anchor="end" font-weight="normal" >0</text>
<line x1="47.0" y1="416.59999999999997" x2="50.5" y2="416.59999999999997" stroke="#555" stroke-width="1" />
<text transform="translate(44.0,418.4) scale(1,1.2)" font-size="9" fill="#111" text-anchor="end" font-weight="normal" >20</text>
<line x1="47.0" y1="391.29999999999995" x2="50.5" y2="391.29999999999995" stroke="#555" stroke-width="1" />
<text transform="translate(44.0,393.09999999999997) scale(1,1.2)" font-size="9" fill="#111" text-anchor="end" font-weight="normal" >40</text>
<line x1="47.0" y1="366.0" x2="50.5" y2="366.0" stroke="#555" stroke-width="1" />
<text transform="translate(44.0,367.8) scale(1,1.2)" font-size="9" fill="#111" text-anchor="end" font-weight="normal" >60</text>
<line x1="47.0" y1="340.7" x2="50.5" y2="340.7" stroke="#555" stroke-width="1" />
<text transform="translate(44.0,342.5) scale(1,1.2)" font-size="9" fill="#111" text-anchor="end" font-weight="normal" >80</text>
<line x1="47.0" y1="315.4" x2="50.5" y2="315.4" stroke="#555" stroke-width="1" />
<text transform="translate(44.0,317.2) scale(1,1.2)" font-size="9" fill="#111" text-anchor="end" font-weight="normal" >100</text>
<line x1="213.5" y1="428.23999999999995" x2="216.5" y2="428.23999999999995" stroke="#555" stroke-width="1" />
<line x1="213.5" y1="400.91999999999996" x2="216.5" y2="400.91999999999996" stroke="#555" stroke-width="1" />
<line x1="213.5" y1="373.59999999999997" x2="216.5" y2="373.59999999999997" stroke="#555" stroke-width="1" />
<line x1="213.5" y1="346.28" x2="216.5" y2="346.28" stroke="#555" stroke-width="1" />
<line x1="213.5" y1="318.96" x2="216.5" y2="318.96" stroke="#555" stroke-width="1" />
<line x1="213.5" y1="441.9" x2="217.0" y2="441.9" stroke="#555" stroke-width="1" />
<text transform="translate(219.0,443.7) scale(1,1.2)" font-size="9" fill="#111" text-anchor="start" font-weight="normal" >0%</text>
<line x1="213.5" y1="414.58" x2="217.0" y2="414.58" stroke="#555" stroke-width="1" />
<text transform="translate(219.0,416.38) scale(1,1.2)" font-size="9" fill="#111" text-anchor="start" font-weight="normal" >5%</text>
<line x1="213.5" y1="387.26" x2="217.0" y2="387.26" stroke="#555" stroke-width="1" />
<text transform="translate(219.0,389.06) scale(1,1.2)" font-size="9" fill="#111" text-anchor="start" font-weight="normal" >10%</text>
<line x1="213.5" y1="359.93999999999994" x2="217.0" y2="359.93999999999994" stroke="#555" stroke-width="1" />
<text transform="translate(219.0,361.73999999999995) scale(1,1.2)" font-size="9" fill="#111" text-anchor="start" font-weight="normal" >15%</text>
<line x1="213.5" y1="332.62" x2="217.0" y2="332.62" stroke="#555" stroke-width="1" />
<text transform="translate(219.0,334.42) scale(1,1.2)" font-size="9" fill="#111" text-anchor="start" font-weight="normal" >20%</text>
<line x1="213.5" y1="305.29999999999995" x2="217.0" y2="305.29999999999995" stroke="#555" stroke-width="1" />
<text transform="translate(219.0,307.09999999999997) scale(1,1.2)" font-size="9" fill="#111" text-anchor="start" font-weight="normal" >25%</text>
<line x1="50.5" y1="442" x2="50.5" y2="445" stroke="#555" stroke-width="1" />
<text transform="translate(51.5,454.3) scale(1,1.2)" font-size="9" fill="#111" text-anchor="middle" font-weight="normal" >50,000</text>
<line x1="90.4" y1="442" x2="90.4" y2="445" stroke="#555" stroke-width="1" />
<text transform="translate(91.4,454.3) scale(1,1.2)" font-size="9" fill="#111" text-anchor="middle" font-weight="normal" >75,000</text>
<line x1="131.1" y1="442" x2="131.1" y2="445" stroke="#555" stroke-width="1" />
<text transform="translate(132.1,454.3) scale(1,1.2)" font-size="9" fill="#111" text-anchor="middle" font-weight="normal" >100,000</text>
<line x1="171.6" y1="442" x2="171.6" y2="445" stroke="#555" stroke-width="1" />
<line x1="213.5" y1="442" x2="213.5" y2="445" stroke="#555" stroke-width="1" />
<text transform="translate(214.5,454.3) scale(1,1.2)" font-size="9" fill="#111" text-anchor="middle" font-weight="normal" >150,000</text>
<rect x="50.5" y="461.5" width="162" height="15" fill="#efefef" stroke="#a0a0a0"/>
<text transform="translate(207.5,472) scale(1,1.03)" font-size="9.6" fill="#111" text-anchor="end" font-weight="normal" >Cost ($)</text>
<rect x="303.0" y="240.3" width="162.0" height="12" fill="#000" />
<text transform="translate(384.0,249.8) scale(1,0.95)" font-size="10.2" fill="#fff" text-anchor="middle" font-weight="normal" >Finish Time</text>
<rect x="303.0" y="254.5" width="162.0" height="27" fill="#efefef" stroke="#a0a0a0"/>
<text transform="translate(384.0,265.0) scale(1,1.0)" font-size="9.7" fill="#111" text-anchor="middle" font-weight="normal" >55% chance that Finish Time will be</text>
<text transform="translate(384.0,275.0) scale(1,1.0)" font-size="9.7" fill="#111" text-anchor="middle" font-weight="normal" >less than Dec 09,2016</text>
<rect x="303" y="289.5" width="162.5" height="152.5" fill="url(#plotbg)" />
<line x1="303" y1="428.23999999999995" x2="465.5" y2="428.23999999999995" stroke="#d8d8e4" stroke-width="1" />
<line x1="303" y1="414.58" x2="465.5" y2="414.58" stroke="#d8d8e4" stroke-width="1" />
<line x1="303" y1="400.91999999999996" x2="465.5" y2="400.91999999999996" stroke="#d8d8e4" stroke-width="1" />
<line x1="303" y1="387.26" x2="465.5" y2="387.26" stroke="#d8d8e4" stroke-width="1" />
<line x1="303" y1="373.59999999999997" x2="465.5" y2="373.59999999999997" stroke="#d8d8e4" stroke-width="1" />
<line x1="303" y1="359.93999999999994" x2="465.5" y2="359.93999999999994" stroke="#d8d8e4" stroke-width="1" />
<line x1="303" y1="346.28" x2="465.5" y2="346.28" stroke="#d8d8e4" stroke-width="1" />
<line x1="303" y1="332.62" x2="465.5" y2="332.62" stroke="#d8d8e4" stroke-width="1" />
<line x1="303" y1="318.96" x2="465.5" y2="318.96" stroke="#d8d8e4" stroke-width="1" />
<line x1="303" y1="305.29999999999995" x2="465.5" y2="305.29999999999995" stroke="#d8d8e4" stroke-width="1" />
<rect x="302.8" y="441.4" width="8.529999999999973" height="0.6000000000000227" fill="url(#rL)" />
<rect x="311.33" y="429.5" width="8.53000000000003" height="12.5" fill="url(#rL)" />
<rect x="319.86" y="391.2" width="8.529999999999973" height="50.80000000000001" fill="url(#rL)" />
<rect x="328.39" y="423.2" width="8.53000000000003" height="18.80000000000001" fill="url(#rL)" />
<rect x="336.92" y="336" width="8.529999999999973" height="106" fill="url(#rL)" />
<rect x="345.45" y="312.8" width="8.53000000000003" height="129.2" fill="url(#rL)" />
<rect x="353.98" y="414.5" width="8.529999999999973" height="27.5" fill="url(#rD)" />
<rect x="362.51" y="320" width="8.53000000000003" height="122" fill="url(#rD)" />
<rect x="371.04" y="388.9" width="8.529999999999973" height="53.10000000000002" fill="url(#rD)" />
<rect x="379.57" y="425.6" width="8.53000000000003" height="16.399999999999977" fill="url(#rD)" />
<rect x="388.1" y="435.1" width="8.529999999999973" height="6.899999999999977" fill="url(#rD)" />
<line x1="352.5" y1="297.5" x2="352.5" y2="442" stroke="#a8c4e4" stroke-width="1" />
<path d="M303.5,442 L303.5,289.5 L465.0,289.5 L465.0,442" fill="none" stroke="#a0a0a0"/>
<line x1="303" y1="442.5" x2="465.5" y2="442.5" stroke="#8a8a8a" stroke-width="1" />
<path d="M349.1,284.5 L356.4,284.5 L356.4,291 L352.75,294.6 L349.1,291 Z" fill="#f6f6f6" stroke="#7a7a7a" stroke-width="1"/>
<line x1="299.5" y1="441.9" x2="303" y2="441.9" stroke="#555" stroke-width="1" />
<text transform="translate(296.5,443.7) scale(1,1.2)" font-size="9" fill="#111" text-anchor="end" font-weight="normal" >0</text>
<line x1="299.5" y1="416.59999999999997" x2="303" y2="416.59999999999997" stroke="#555" stroke-width="1" />
<text transform="translate(296.5,418.4) scale(1,1.2)" font-size="9" fill="#111" text-anchor="end" font-weight="normal" >20</text>
<line x1="299.5" y1="391.29999999999995" x2="303" y2="391.29999999999995" stroke="#555" stroke-width="1" />
<text transform="translate(296.5,393.09999999999997) scale(1,1.2)" font-size="9" fill="#111" text-anchor="end" font-weight="normal" >40</text>
<line x1="299.5" y1="366.0" x2="303" y2="366.0" stroke="#555" stroke-width="1" />
<text transform="translate(296.5,367.8) scale(1,1.2)" font-size="9" fill="#111" text-anchor="end" font-weight="normal" >60</text>
<line x1="299.5" y1="340.7" x2="303" y2="340.7" stroke="#555" stroke-width="1" />
<text transform="translate(296.5,342.5) scale(1,1.2)" font-size="9" fill="#111" text-anchor="end" font-weight="normal" >80</text>
<line x1="299.5" y1="315.4" x2="303" y2="315.4" stroke="#555" stroke-width="1" />
<text transform="translate(296.5,317.2) scale(1,1.2)" font-size="9" fill="#111" text-anchor="end" font-weight="normal" >100</text>
<line x1="465.5" y1="428.23999999999995" x2="468.5" y2="428.23999999999995" stroke="#555" stroke-width="1" />
<line x1="465.5" y1="400.91999999999996" x2="468.5" y2="400.91999999999996" stroke="#555" stroke-width="1" />
<line x1="465.5" y1="373.59999999999997" x2="468.5" y2="373.59999999999997" stroke="#555" stroke-width="1" />
<line x1="465.5" y1="346.28" x2="468.5" y2="346.28" stroke="#555" stroke-width="1" />
<line x1="465.5" y1="318.96" x2="468.5" y2="318.96" stroke="#555" stroke-width="1" />
<line x1="465.5" y1="441.9" x2="469.0" y2="441.9" stroke="#555" stroke-width="1" />
<text transform="translate(471.0,443.7) scale(1,1.2)" font-size="9" fill="#111" text-anchor="start" font-weight="normal" >0%</text>
<line x1="465.5" y1="414.58" x2="469.0" y2="414.58" stroke="#555" stroke-width="1" />
<text transform="translate(471.0,416.38) scale(1,1.2)" font-size="9" fill="#111" text-anchor="start" font-weight="normal" >5%</text>
<line x1="465.5" y1="387.26" x2="469.0" y2="387.26" stroke="#555" stroke-width="1" />
<text transform="translate(471.0,389.06) scale(1,1.2)" font-size="9" fill="#111" text-anchor="start" font-weight="normal" >10%</text>
<line x1="465.5" y1="359.93999999999994" x2="469.0" y2="359.93999999999994" stroke="#555" stroke-width="1" />
<text transform="translate(471.0,361.73999999999995) scale(1,1.2)" font-size="9" fill="#111" text-anchor="start" font-weight="normal" >15%</text>
<line x1="465.5" y1="332.62" x2="469.0" y2="332.62" stroke="#555" stroke-width="1" />
<text transform="translate(471.0,334.42) scale(1,1.2)" font-size="9" fill="#111" text-anchor="start" font-weight="normal" >20%</text>
<line x1="465.5" y1="305.29999999999995" x2="469.0" y2="305.29999999999995" stroke="#555" stroke-width="1" />
<text transform="translate(471.0,307.09999999999997) scale(1,1.2)" font-size="9" fill="#111" text-anchor="start" font-weight="normal" >25%</text>
<rect x="303" y="442.5" width="162.5" height="33.5" fill="#efefef" />
<path d="M303.5,442.5 L303.5,476 M465,442.5 L465,476 M303,459.5 L465.5,459.5 M323.5,442.5 L323.5,459.5 M429.5,442.5 L429.5,459.5" stroke="#a0a0a0" fill="none"/>
<line x1="308.5" y1="459.5" x2="308.5" y2="476" stroke="#a0a0a0" stroke-width="1" />
<line x1="333.5" y1="459.5" x2="333.5" y2="476" stroke="#a0a0a0" stroke-width="1" />
<line x1="357.5" y1="459.5" x2="357.5" y2="476" stroke="#a0a0a0" stroke-width="1" />
<line x1="381.5" y1="459.5" x2="381.5" y2="476" stroke="#a0a0a0" stroke-width="1" />
<line x1="405.5" y1="459.5" x2="405.5" y2="476" stroke="#a0a0a0" stroke-width="1" />
<line x1="428.5" y1="459.5" x2="428.5" y2="476" stroke="#a0a0a0" stroke-width="1" />
<line x1="453.5" y1="459.5" x2="453.5" y2="476" stroke="#a0a0a0" stroke-width="1" />
<text transform="translate(327.5,454.8) scale(1,1.0)" font-size="9.4" fill="#111" text-anchor="start" font-weight="normal" >December, 2016</text>
<g clip-path="url(#clipdate)">
<text transform="translate(433,454.8) scale(1,1.0)" font-size="9.4" fill="#111" text-anchor="start" font-weight="normal" >January</text>
<text transform="translate(456.3,470.8) scale(1,1.0)" font-size="9.4" fill="#111" text-anchor="start" font-weight="normal" >08</text>
</g>
<text transform="translate(312.8,470.8) scale(1,1.0)" font-size="9.4" fill="#111" text-anchor="start" font-weight="normal" >27</text>
<text transform="translate(337,470.8) scale(1,1.0)" font-size="9.4" fill="#111" text-anchor="start" font-weight="normal" >04</text>
<text transform="translate(361.8,470.8) scale(1,1.0)" font-size="9.4" fill="#111" text-anchor="start" font-weight="normal" >11</text>
<text transform="translate(385.3,470.8) scale(1,1.0)" font-size="9.4" fill="#111" text-anchor="start" font-weight="normal" >18</text>
<text transform="translate(408.8,470.8) scale(1,1.0)" font-size="9.4" fill="#111" text-anchor="start" font-weight="normal" >25</text>
<text transform="translate(432.3,470.8) scale(1,1.0)" font-size="9.4" fill="#111" text-anchor="start" font-weight="normal" >01</text>
<line x1="303" y1="475.5" x2="465.5" y2="475.5" stroke="#8a8a8a" stroke-width="1" />
<rect x="555.5" y="240.3" width="163" height="12" fill="#000" />
<text transform="translate(637.0,249.8) scale(1,0.95)" font-size="10.2" fill="#fff" text-anchor="middle" font-weight="normal" >Duration</text>
<rect x="555.5" y="254.5" width="163" height="27" fill="#efefef" stroke="#a0a0a0"/>
<text transform="translate(637.0,265.0) scale(1,1.0)" font-size="9.7" fill="#111" text-anchor="middle" font-weight="normal" >48% chance that Duration will be</text>
<text transform="translate(637.0,275.0) scale(1,1.0)" font-size="9.7" fill="#111" text-anchor="middle" font-weight="normal" >less than 42.81 (day)</text>
<rect x="555.5" y="289.5" width="164.0" height="152.5" fill="url(#plotbg)" />
<line x1="555.5" y1="426.57" x2="719.5" y2="426.57" stroke="#d8d8e4" stroke-width="1" />
<line x1="555.5" y1="411.23999999999995" x2="719.5" y2="411.23999999999995" stroke="#d8d8e4" stroke-width="1" />
<line x1="555.5" y1="395.90999999999997" x2="719.5" y2="395.90999999999997" stroke="#d8d8e4" stroke-width="1" />
<line x1="555.5" y1="380.58" x2="719.5" y2="380.58" stroke="#d8d8e4" stroke-width="1" />
<line x1="555.5" y1="365.25" x2="719.5" y2="365.25" stroke="#d8d8e4" stroke-width="1" />
<line x1="555.5" y1="349.91999999999996" x2="719.5" y2="349.91999999999996" stroke="#d8d8e4" stroke-width="1" />
<line x1="555.5" y1="334.59" x2="719.5" y2="334.59" stroke="#d8d8e4" stroke-width="1" />
<line x1="555.5" y1="319.26" x2="719.5" y2="319.26" stroke="#d8d8e4" stroke-width="1" />
<line x1="555.5" y1="303.92999999999995" x2="719.5" y2="303.92999999999995" stroke="#d8d8e4" stroke-width="1" />
<line x1="595.5" y1="303.92999999999995" x2="595.5" y2="442" stroke="#dcdce8" stroke-width="1" />
<line x1="636.4" y1="303.92999999999995" x2="636.4" y2="442" stroke="#dcdce8" stroke-width="1" />
<line x1="677.5" y1="303.92999999999995" x2="677.5" y2="442" stroke="#dcdce8" stroke-width="1" />
<rect x="606.1" y="440.7" width="9.100000000000023" height="1.3000000000000114" fill="url(#bL)" />
<rect x="615.2" y="435.2" width="8.199999999999932" height="6.800000000000011" fill="url(#bL)" />
<rect x="623.4" y="417.2" width="8.300000000000068" height="24.80000000000001" fill="url(#bL)" />
<rect x="631.7" y="392.4" width="9.099999999999909" height="49.60000000000002" fill="url(#bL)" />
<rect x="640.8" y="374.5" width="8.900000000000091" height="67.5" fill="url(#bL)" />
<rect x="649.7" y="331.7" width="8.199999999999932" height="110.30000000000001" fill="url(#bL)" />
<rect x="657.9" y="310.5" width="8.300000000000068" height="131.5" fill="url(#bL)" />
<rect x="666.2" y="335.3" width="8.799999999999955" height="106.69999999999999" fill="url(#bD)" />
<rect x="675" y="316.6" width="9.100000000000023" height="125.39999999999998" fill="url(#bD)" />
<rect x="684.1" y="377.8" width="8.299999999999955" height="64.19999999999999" fill="url(#bD)" />
<rect x="692.4" y="387.2" width="8.300000000000068" height="54.80000000000001" fill="url(#bD)" />
<rect x="700.7" y="418.6" width="9.099999999999909" height="23.399999999999977" fill="url(#bD)" />
<line x1="666.2" y1="297.5" x2="666.2" y2="442" stroke="#a8c4e4" stroke-width="1" />
<path d="M556.0,442 L556.0,289.5 L719.0,289.5 L719.0,442" fill="none" stroke="#a0a0a0"/>
<line x1="555.5" y1="442.5" x2="719.5" y2="442.5" stroke="#8a8a8a" stroke-width="1" />
<path d="M662.8000000000001,284.5 L670.1,284.5 L670.1,291 L666.45,294.6 L662.8000000000001,291 Z" fill="#f6f6f6" stroke="#7a7a7a" stroke-width="1"/>
<line x1="552.0" y1="441.9" x2="555.5" y2="441.9" stroke="#555" stroke-width="1" />
<text transform="translate(549.0,443.7) scale(1,1.2)" font-size="9" fill="#111" text-anchor="end" font-weight="normal" >0</text>
<line x1="552.0" y1="406.4" x2="555.5" y2="406.4" stroke="#555" stroke-width="1" />
<text transform="translate(549.0,408.2) scale(1,1.2)" font-size="9" fill="#111" text-anchor="end" font-weight="normal" >20</text>
<line x1="552.0" y1="370.9" x2="555.5" y2="370.9" stroke="#555" stroke-width="1" />
<text transform="translate(549.0,372.7) scale(1,1.2)" font-size="9" fill="#111" text-anchor="end" font-weight="normal" >40</text>
<line x1="552.0" y1="335.4" x2="555.5" y2="335.4" stroke="#555" stroke-width="1" />
<text transform="translate(549.0,337.2) scale(1,1.2)" font-size="9" fill="#111" text-anchor="end" font-weight="normal" >60</text>
<line x1="719.5" y1="426.57" x2="722.5" y2="426.57" stroke="#555" stroke-width="1" />
<line x1="719.5" y1="395.90999999999997" x2="722.5" y2="395.90999999999997" stroke="#555" stroke-width="1" />
<line x1="719.5" y1="365.25" x2="722.5" y2="365.25" stroke="#555" stroke-width="1" />
<line x1="719.5" y1="334.59" x2="722.5" y2="334.59" stroke="#555" stroke-width="1" />
<line x1="719.5" y1="303.92999999999995" x2="722.5" y2="303.92999999999995" stroke="#555" stroke-width="1" />
<line x1="719.5" y1="441.9" x2="723.0" y2="441.9" stroke="#555" stroke-width="1" />
<text transform="translate(725.0,443.7) scale(1,1.2)" font-size="9" fill="#111" text-anchor="start" font-weight="normal" >0%</text>
<line x1="719.5" y1="411.23999999999995" x2="723.0" y2="411.23999999999995" stroke="#555" stroke-width="1" />
<text transform="translate(725.0,413.03999999999996) scale(1,1.2)" font-size="9" fill="#111" text-anchor="start" font-weight="normal" >4%</text>
<line x1="719.5" y1="380.58" x2="723.0" y2="380.58" stroke="#555" stroke-width="1" />
<text transform="translate(725.0,382.38) scale(1,1.2)" font-size="9" fill="#111" text-anchor="start" font-weight="normal" >8%</text>
<line x1="719.5" y1="349.91999999999996" x2="723.0" y2="349.91999999999996" stroke="#555" stroke-width="1" />
<text transform="translate(725.0,351.71999999999997) scale(1,1.2)" font-size="9" fill="#111" text-anchor="start" font-weight="normal" >12%</text>
<line x1="719.5" y1="319.26" x2="723.0" y2="319.26" stroke="#555" stroke-width="1" />
<text transform="translate(725.0,321.06) scale(1,1.2)" font-size="9" fill="#111" text-anchor="start" font-weight="normal" >16%</text>
<line x1="555.5" y1="442" x2="555.5" y2="445" stroke="#555" stroke-width="1" />
<text transform="translate(555.5,454.3) scale(1,1.2)" font-size="9" fill="#111" text-anchor="middle" font-weight="normal" >22.50</text>
<line x1="595.5" y1="442" x2="595.5" y2="445" stroke="#555" stroke-width="1" />
<text transform="translate(595.5,454.3) scale(1,1.2)" font-size="9" fill="#111" text-anchor="middle" font-weight="normal" >30.00</text>
<line x1="636.4" y1="442" x2="636.4" y2="445" stroke="#555" stroke-width="1" />
<text transform="translate(636.4,454.3) scale(1,1.2)" font-size="9" fill="#111" text-anchor="middle" font-weight="normal" >37.50</text>
<line x1="677.5" y1="442" x2="677.5" y2="445" stroke="#555" stroke-width="1" />
<text transform="translate(677.5,454.3) scale(1,1.2)" font-size="9" fill="#111" text-anchor="middle" font-weight="normal" >45.00</text>
<line x1="719" y1="442" x2="719" y2="445" stroke="#555" stroke-width="1" />
<text transform="translate(719,454.3) scale(1,1.2)" font-size="9" fill="#111" text-anchor="middle" font-weight="normal" >52.50</text>
<rect x="555.5" y="461.5" width="164" height="15" fill="#efefef" stroke="#a0a0a0"/>
<text transform="translate(714,472) scale(1,1.03)" font-size="9.8" fill="#111" text-anchor="end" font-weight="normal" >Duration (day)</text>
<rect x="510" y="483" width="255" height="15" fill="#f0f0f0" />
<line x1="510" y1="483.5" x2="765" y2="483.5" stroke="#e3e3e3" stroke-width="1" />
<line x1="510.5" y1="483" x2="510.5" y2="498" stroke="#e3e3e3" stroke-width="1" />
<line x1="510" y1="497.5" x2="765" y2="497.5" stroke="#696969" stroke-width="1" />
<line x1="764.5" y1="483" x2="764.5" y2="498" stroke="#696969" stroke-width="1" />
<line x1="511" y1="484.5" x2="764" y2="484.5" stroke="#ffffff" stroke-width="1" />
<line x1="511.5" y1="484" x2="511.5" y2="497" stroke="#ffffff" stroke-width="1" />
<line x1="511" y1="496.5" x2="764" y2="496.5" stroke="#a0a0a0" stroke-width="1" />
<line x1="763.5" y1="484" x2="763.5" y2="497" stroke="#a0a0a0" stroke-width="1" />
<text transform="translate(636.9,493.6) scale(1,1.05)" font-size="9.35" fill="#111" text-anchor="middle" font-weight="normal" >Statistical Data for Work</text>
<line x1="5" y1="501" x2="767" y2="501" stroke="#7a7a7a" stroke-width="1" />
<line x1="5" y1="502" x2="767" y2="502" stroke="#ffffff" stroke-width="1" />
<rect x="317" y="503" width="64" height="19" fill="#f0f0f0" />
<line x1="317" y1="503.5" x2="381" y2="503.5" stroke="#555555" stroke-width="1" />
<line x1="317.5" y1="503" x2="317.5" y2="522" stroke="#555555" stroke-width="1" />
<line x1="317" y1="521.5" x2="381" y2="521.5" stroke="#555555" stroke-width="1" />
<line x1="380.5" y1="503" x2="380.5" y2="522" stroke="#555555" stroke-width="1" />
<line x1="318" y1="504.5" x2="380" y2="504.5" stroke="#ffffff" stroke-width="1" />
<line x1="318.5" y1="504" x2="318.5" y2="521" stroke="#ffffff" stroke-width="1" />
<line x1="318" y1="520.5" x2="380" y2="520.5" stroke="#6a6a6a" stroke-width="1" />
<line x1="379.5" y1="504" x2="379.5" y2="521" stroke="#6a6a6a" stroke-width="1" />
<rect x="320.5" y="506.5" width="57" height="12" fill="none" stroke="#202020" stroke-dasharray="1,1" shape-rendering="crispEdges"/>
<text transform="translate(348.4,515.8) scale(1,1.05)" font-size="8.9" fill="#111" text-anchor="middle" font-weight="normal" >OK</text>
<rect x="383" y="503" width="64" height="19" fill="#f0f0f0" />
<line x1="383" y1="503.5" x2="447" y2="503.5" stroke="#e3e3e3" stroke-width="1" />
<line x1="383.5" y1="503" x2="383.5" y2="522" stroke="#e3e3e3" stroke-width="1" />
<line x1="383" y1="521.5" x2="447" y2="521.5" stroke="#696969" stroke-width="1" />
<line x1="446.5" y1="503" x2="446.5" y2="522" stroke="#696969" stroke-width="1" />
<line x1="384" y1="504.5" x2="446" y2="504.5" stroke="#ffffff" stroke-width="1" />
<line x1="384.5" y1="504" x2="384.5" y2="521" stroke="#ffffff" stroke-width="1" />
<line x1="384" y1="520.5" x2="446" y2="520.5" stroke="#a0a0a0" stroke-width="1" />
<line x1="445.5" y1="504" x2="445.5" y2="521" stroke="#a0a0a0" stroke-width="1" />
<text transform="translate(414.5,515.8) scale(1,1.05)" font-size="9.3" fill="#111" text-anchor="middle" font-weight="normal" >Cancel</text>
</svg>
</body></html>
